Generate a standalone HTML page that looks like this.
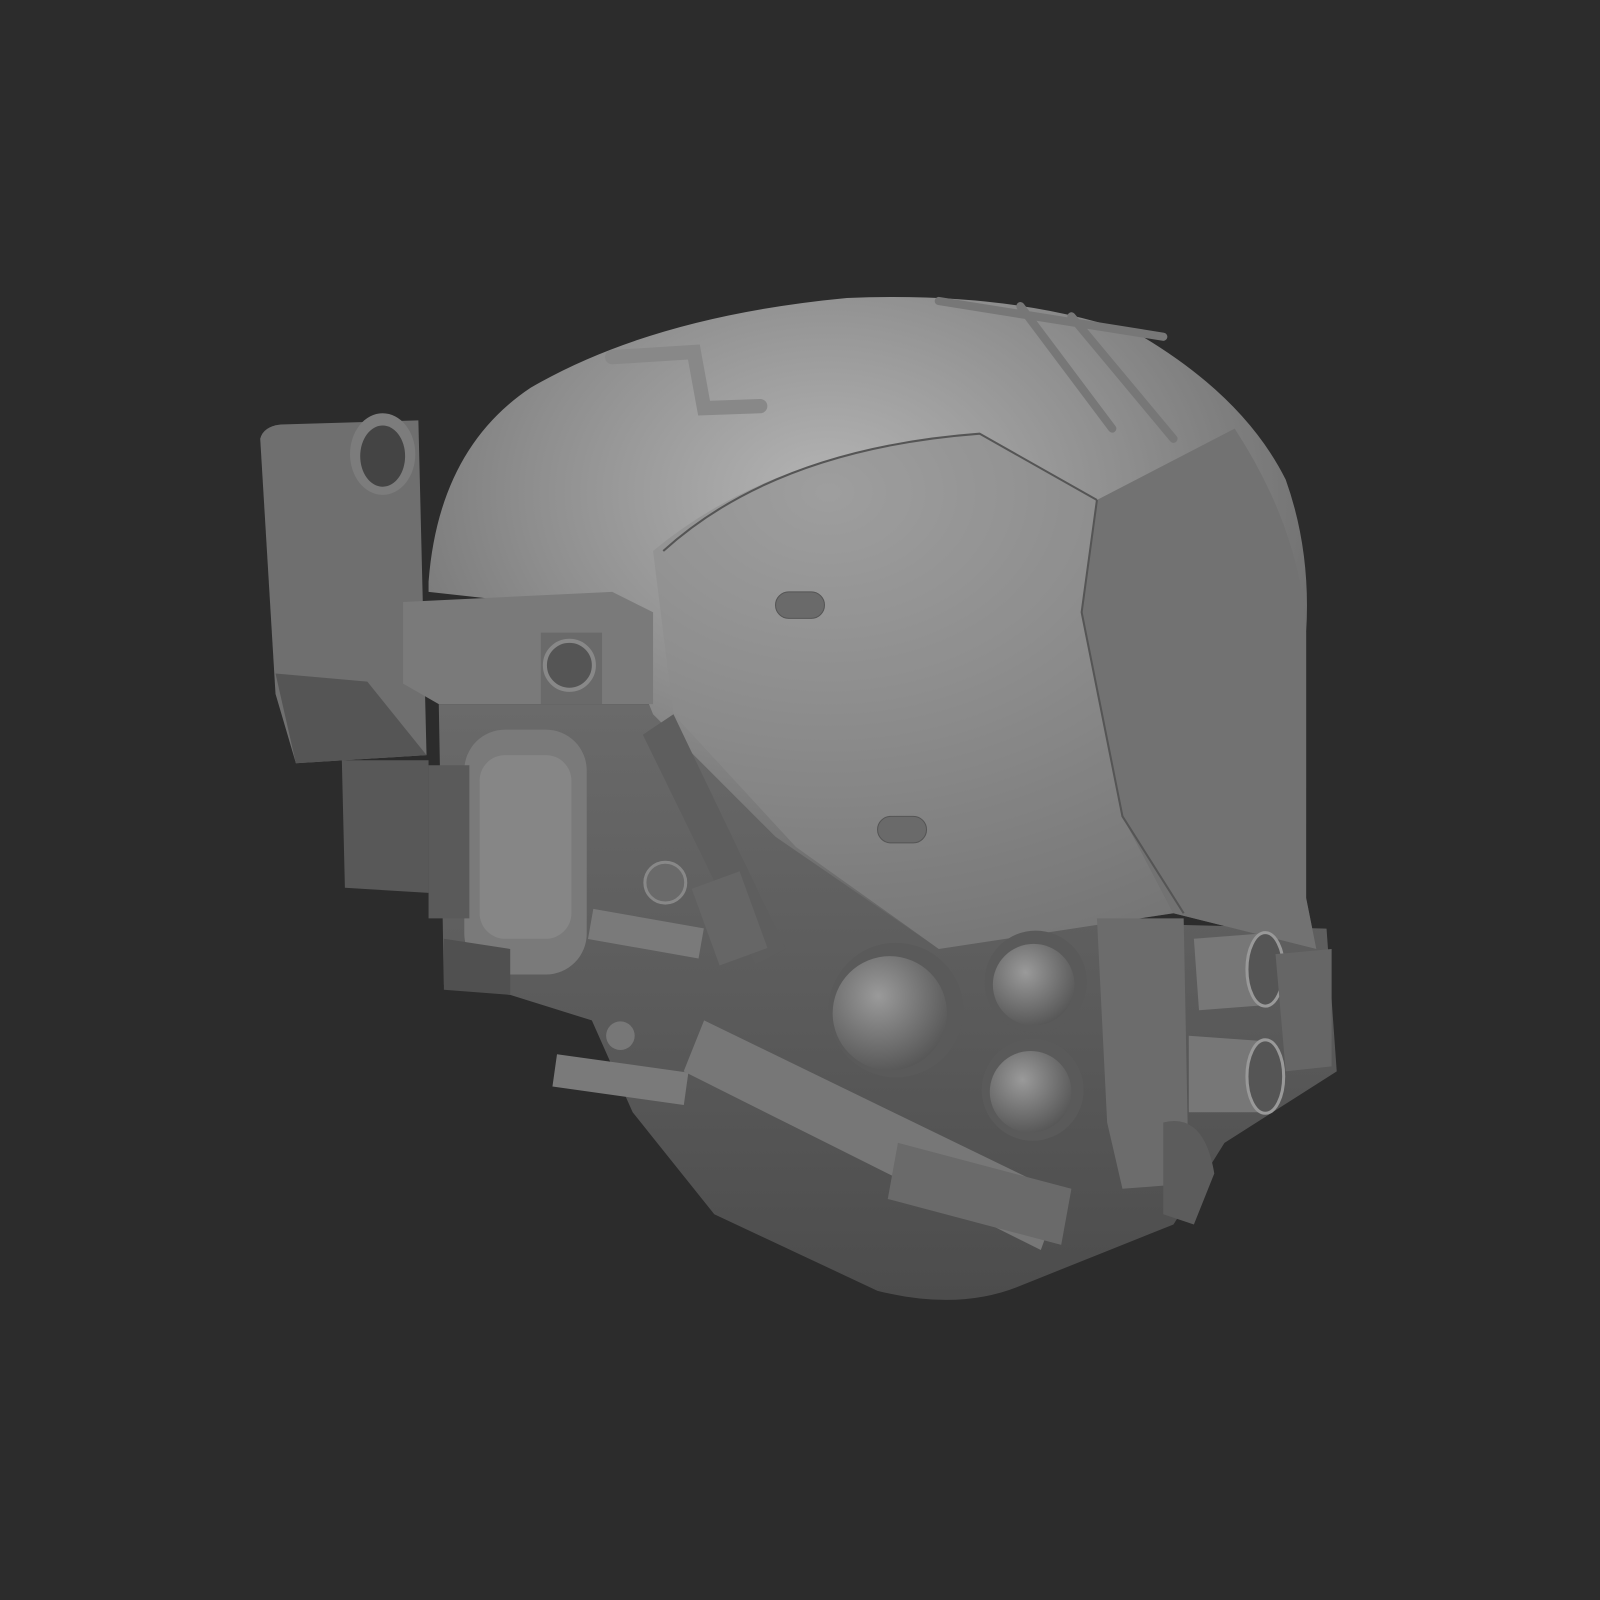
<!DOCTYPE html>
<html><head><style>
html,body{margin:0;padding:0;background:#2c2c2c;width:1600px;height:1600px;overflow:hidden}
svg{display:block}
</style></head><body>
<svg width="1600" height="1600" viewBox="0 0 1568 1568" xmlns="http://www.w3.org/2000/svg">
<defs>
<radialGradient id="dome" cx="0.45" cy="0.3" r="0.75">
<stop offset="0" stop-color="#b4b4b4"/><stop offset="0.45" stop-color="#8e8e8e"/><stop offset="1" stop-color="#5a5a5a"/>
</radialGradient>
<linearGradient id="side" x1="0" y1="0" x2="1" y2="1">
<stop offset="0" stop-color="#8a8a8a"/><stop offset="1" stop-color="#5e5e5e"/>
</linearGradient>
<linearGradient id="lower" x1="0" y1="0" x2="0" y2="1">
<stop offset="0" stop-color="#6a6a6a"/><stop offset="1" stop-color="#4c4c4c"/>
</linearGradient>
<radialGradient id="cyl" cx="0.4" cy="0.35" r="0.7">
<stop offset="0" stop-color="#9a9a9a"/><stop offset="1" stop-color="#555"/>
</radialGradient>
</defs>
<rect width="1568" height="1568" fill="#2c2c2c"/>
<!-- back box -->
<path d="M255,430 Q258,418 275,416 L410,412 L418,740 L290,748 L270,680 Z" fill="#6f6f6f"/>
<path d="M270,660 L360,668 L418,740 L290,748 Z" fill="#555"/>
<path d="M335,745 L420,745 L420,875 L338,870 Z" fill="#585858"/>
<ellipse cx="375" cy="445" rx="32" ry="40" fill="#7c7c7c"/>
<ellipse cx="375" cy="447" rx="22" ry="30" fill="#444"/>
<!-- lower face -->
<path d="M430,690 L640,690 L900,900 L1300,910 L1310,1050 L1200,1120 L1150,1200 L1000,1260 Q940,1285 860,1265 L700,1190 L620,1090 L580,1000 L500,975 L435,965 Z" fill="url(#lower)"/>
<!-- dome -->
<path d="M420,570 Q430,440 520,380 Q640,310 830,292 Q1000,285 1120,330 Q1220,390 1260,470 Q1285,540 1280,620 L1280,880 L1290,930 L1150,895 L920,930 L760,820 L640,700 L600,600 L420,580 Z" fill="url(#dome)"/>
<!-- right panel -->
<path d="M1075,490 L1210,420 Q1275,520 1280,620 L1280,880 L1290,930 L1150,895 L1100,800 L1060,600 Z" fill="#727272"/>
<path d="M640,540 Q760,440 960,425 L1075,490 L1060,600 L1100,800 L1150,895 L920,930 L780,830 L660,700 Z" fill="#8c8c8c" opacity="0.55"/>
<path d="M650,540 Q760,440 960,425 L1075,490" fill="none" stroke="#555" stroke-width="2"/>
<path d="M1075,490 L1060,600 L1100,800 L1160,895" fill="none" stroke="#555" stroke-width="2"/>
<!-- rails on top -->
<path d="M920,295 L1140,330 M1000,300 L1090,420 M1050,310 L1150,430" stroke="#777" stroke-width="8" fill="none" stroke-linecap="round"/>
<path d="M600,350 L680,345 L690,400 L745,398" stroke="#888" stroke-width="14" fill="none" stroke-linecap="round"/>
<!-- slots -->
<rect x="760" y="580" width="48" height="26" rx="13" fill="#6a6a6a" stroke="#555"/>
<rect x="860" y="800" width="48" height="26" rx="13" fill="#6a6a6a" stroke="#555"/>
<!-- front mount -->
<path d="M395,590 L600,580 L640,600 L640,690 L430,690 L395,670 Z" fill="#7a7a7a"/>
<rect x="530" y="620" width="60" height="70" fill="#6a6a6a"/>
<circle cx="558" cy="652" r="24" fill="#555" stroke="#888" stroke-width="4"/>
<!-- ear cup -->
<rect x="455" y="715" width="120" height="240" rx="40" fill="#7a7a7a"/>
<rect x="470" y="740" width="90" height="180" rx="25" fill="#868686"/>
<path d="M420,750 L460,750 L460,900 L420,900 Z" fill="#5a5a5a"/>
<path d="M435,920 L500,930 L500,975 L435,970 Z" fill="#505050"/>
<!-- strap -->
<path d="M630,720 L660,700 L770,930 L740,945 Z" fill="#5e5e5e"/>
<rect x="690" y="860" width="50" height="80" fill="#666" transform="rotate(-20 715 900)"/>
<circle cx="652" cy="865" r="20" fill="#6a6a6a" stroke="#888" stroke-width="3"/>
<rect x="578" y="900" width="110" height="30" fill="#7a7a7a" transform="rotate(10 633 915)"/>
<rect x="543" y="1042" width="130" height="32" fill="#7a7a7a" transform="rotate(8 608 1058)"/>
<circle cx="608" cy="1015" r="14" fill="#777"/>
<!-- tube -->
<path d="M690,1000 L1040,1170 L1020,1225 L670,1050 Z" fill="#777"/>
<path d="M880,1120 L1050,1165 L1040,1220 L870,1175 Z" fill="#6a6a6a"/>
<!-- filters -->
<circle cx="878" cy="990" r="66" fill="#5a5a5a"/>
<circle cx="872" cy="993" r="56" fill="url(#cyl)"/>
<circle cx="1015" cy="962" r="50" fill="#5a5a5a"/>
<circle cx="1013" cy="965" r="40" fill="url(#cyl)"/>
<circle cx="1012" cy="1068" r="50" fill="#5a5a5a"/>
<circle cx="1010" cy="1070" r="40" fill="url(#cyl)"/>
<!-- right bracket -->
<path d="M1075,900 L1160,900 L1165,1160 L1100,1165 L1085,1100 Z" fill="#6c6c6c"/>
<!-- lens cylinders -->
<path d="M1170,920 L1235,915 L1240,985 L1175,990 Z" fill="#777"/>
<ellipse cx="1240" cy="950" rx="18" ry="36" fill="#555" stroke="#999" stroke-width="3"/>
<path d="M1165,1015 L1235,1020 L1240,1090 L1165,1090 Z" fill="#777"/>
<ellipse cx="1240" cy="1055" rx="18" ry="36" fill="#555" stroke="#999" stroke-width="3"/>
<path d="M1250,935 L1305,930 L1305,1045 L1260,1050 Z" fill="#666"/>
<path d="M1140,1100 Q1180,1090 1190,1150 L1170,1200 L1140,1190 Z" fill="#5c5c5c"/>
</svg>
</body></html>
